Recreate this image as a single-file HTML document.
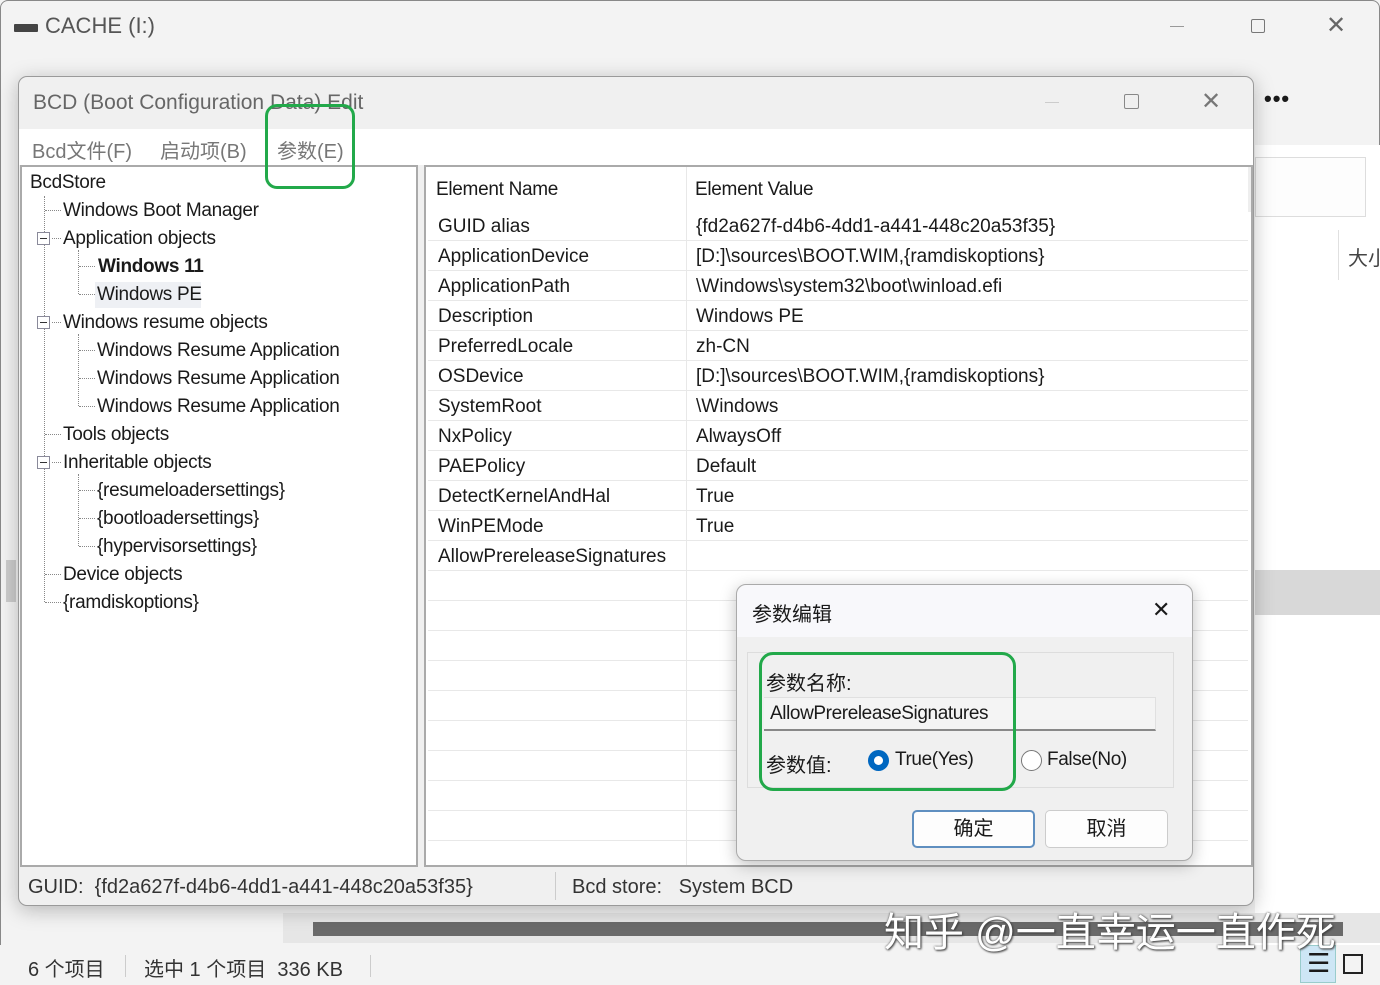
<!DOCTYPE html>
<html><head><meta charset="utf-8"><style>
*{margin:0;padding:0;box-sizing:border-box}
body{width:1380px;height:985px;overflow:hidden;background:#f3f3f3;font-family:"Liberation Sans","Noto Sans CJK SC",sans-serif;color:#1a1a1a;position:relative}
.a{position:absolute;white-space:nowrap}
.t{font-size:19px;letter-spacing:-0.3px}
.row{position:absolute;left:428px;width:820px;height:30px;border-bottom:1px solid #e8e8e8;font-size:19px}
.row span{position:absolute;top:5px}
.dot{position:absolute;border-left:1px dotted #888}
.hd{position:absolute;border-top:1px dotted #888;height:0}
.box{position:absolute;width:13px;height:13px;border:1px solid #8a8a9a;background:#fff}
.box:after{content:"";position:absolute;left:2px;top:5px;width:7px;height:1px;background:#333}
</style></head><body>
<div class="a" style="left:0;top:0;width:1380px;height:985px;border:1px solid #888;border-radius:8px;background:#f3f3f3"></div>
<div class="a" style="left:14px;top:24px;width:24px;height:8px;background:#444;border-radius:1px"></div>
<div class="a" style="left:45px;top:13px;font-size:22px;color:#555">CACHE (I:)</div>
<div class="a" style="left:1170px;top:26px;width:14px;height:1px;background:#999"></div>
<div class="a" style="left:1251px;top:19px;width:14px;height:14px;border:1.5px solid #777;border-radius:2px"></div>
<div class="a" style="left:1326px;top:11px;font-size:24px;color:#666">✕</div>
<div class="a" style="left:1264px;top:86px;font-size:22px;font-weight:bold;letter-spacing:1px">•••</div>
<div class="a" style="left:1255px;top:145px;width:125px;height:840px;background:#fff"></div>
<div class="a" style="left:1255px;top:157px;width:111px;height:60px;border:1px solid #ddd;background:#fdfdfd"></div>
<div class="a" style="left:1338px;top:230px;width:1px;height:50px;background:#e0e0e0"></div>
<div class="a" style="left:1348px;top:242px;font-size:20px;color:#444">大小</div>
<div class="a" style="left:1255px;top:570px;width:125px;height:45px;background:#d8d8d8"></div>
<div class="a" style="left:6px;top:560px;width:10px;height:42px;background:#ccc"></div>
<div class="a" style="left:283px;top:913px;width:1097px;height:30px;background:#e6e6e6"></div>
<div class="a" style="left:313px;top:922px;width:1030px;height:14px;background:#6a6a6a"></div>
<div class="a" style="left:0;top:945px;width:1380px;height:40px;background:#f3f3f3"></div>
<div class="a" style="left:28px;top:953px;font-size:20px;color:#333">6 个项目</div>
<div class="a" style="left:125px;top:955px;width:1px;height:22px;background:#ccc"></div>
<div class="a" style="left:144px;top:953px;font-size:20px;color:#333">选中 1 个项目&nbsp; 336 KB</div>
<div class="a" style="left:370px;top:955px;width:1px;height:22px;background:#ccc"></div>
<div class="a" style="left:1300px;top:945px;width:36px;height:38px;background:#cde6f5;border:1px solid #9cc"></div>
<div class="a" style="left:1307px;top:948px;font-size:26px">☰</div>
<div class="a" style="left:1343px;top:954px;width:20px;height:20px;border:2px solid #222"></div>
<div class="a" style="left:18px;top:76px;width:1236px;height:830px;background:#f0f0f0;border:1px solid #9a9a9a;border-radius:9px;box-shadow:0 4px 20px rgba(0,0,0,.25)"></div>
<div class="a" style="left:33px;top:91px;font-size:21px;color:#666">BCD (Boot Configuration Data) Edit</div>
<div class="a" style="left:1045px;top:102px;width:14px;height:1px;background:#ccc"></div>
<div class="a" style="left:1124px;top:94px;width:15px;height:15px;border:1.5px solid #888;border-radius:2px"></div>
<div class="a" style="left:1201px;top:87px;font-size:24px;color:#777">✕</div>
<div class="a" style="left:19px;top:129px;width:1234px;height:36px;background:#fff"></div>
<div class="a" style="left:32px;top:135px;font-size:20px;color:#777">Bcd文件(F)</div>
<div class="a" style="left:160px;top:135px;font-size:20px;color:#777">启动项(B)</div>
<div class="a" style="left:277px;top:135px;font-size:20px;color:#777">参数(E)</div>
<div class="a" style="left:20px;top:165px;width:398px;height:702px;background:#fff;border:2px solid #aaa"></div>
<div class="a t" style="left:30px;top:172px">BcdStore</div>
<div class="dot" style="left:44px;top:196px;height:406px"></div>
<div class="dot" style="left:78px;top:250px;height:44px"></div>
<div class="dot" style="left:78px;top:334px;height:72px"></div>
<div class="dot" style="left:78px;top:474px;height:72px"></div>
<div class="hd" style="left:45px;top:210px;width:16px"></div>
<div class="hd" style="left:52px;top:238px;width:9px"></div>
<div class="hd" style="left:79px;top:266px;width:16px"></div>
<div class="hd" style="left:79px;top:294px;width:16px"></div>
<div class="hd" style="left:52px;top:322px;width:9px"></div>
<div class="hd" style="left:79px;top:350px;width:16px"></div>
<div class="hd" style="left:79px;top:378px;width:16px"></div>
<div class="hd" style="left:79px;top:406px;width:16px"></div>
<div class="hd" style="left:45px;top:434px;width:16px"></div>
<div class="hd" style="left:52px;top:462px;width:9px"></div>
<div class="hd" style="left:79px;top:490px;width:16px"></div>
<div class="hd" style="left:79px;top:518px;width:16px"></div>
<div class="hd" style="left:79px;top:546px;width:16px"></div>
<div class="hd" style="left:45px;top:574px;width:16px"></div>
<div class="hd" style="left:45px;top:602px;width:16px"></div>
<div class="box" style="left:37px;top:232px"></div>
<div class="box" style="left:37px;top:316px"></div>
<div class="box" style="left:37px;top:456px"></div>
<div class="a t" style="left:63px;top:200px">Windows Boot Manager</div>
<div class="a t" style="left:63px;top:228px">Application objects</div>
<div class="a t" style="left:98px;top:256px;font-weight:bold">Windows 11</div>
<div class="a" style="left:95px;top:282px;width:106px;height:26px;background:#eef0f4"></div>
<div class="a t" style="left:97px;top:284px">Windows PE</div>
<div class="a t" style="left:63px;top:312px">Windows resume objects</div>
<div class="a t" style="left:97px;top:340px">Windows Resume Application</div>
<div class="a t" style="left:97px;top:368px">Windows Resume Application</div>
<div class="a t" style="left:97px;top:396px">Windows Resume Application</div>
<div class="a t" style="left:63px;top:424px">Tools objects</div>
<div class="a t" style="left:63px;top:452px">Inheritable objects</div>
<div class="a t" style="left:97px;top:480px">{resumeloadersettings}</div>
<div class="a t" style="left:97px;top:508px">{bootloadersettings}</div>
<div class="a t" style="left:97px;top:536px">{hypervisorsettings}</div>
<div class="a t" style="left:63px;top:564px">Device objects</div>
<div class="a t" style="left:63px;top:592px">{ramdiskoptions}</div>
<div class="a" style="left:424px;top:165px;width:829px;height:702px;background:#fff;border:2px solid #aaa"></div>
<div class="a" style="left:686px;top:167px;width:1px;height:698px;background:#e8e8e8"></div>
<div class="a" style="left:1248px;top:167px;width:3px;height:45px;background:#eee"></div>
<div class="a t" style="left:436px;top:179px">Element Name</div>
<div class="a t" style="left:695px;top:179px">Element Value</div>
<div class="row" style="top:211px"><span style="left:10px">GUID alias</span><span style="left:268px">{fd2a627f-d4b6-4dd1-a441-448c20a53f35}</span></div>
<div class="row" style="top:241px"><span style="left:10px">ApplicationDevice</span><span style="left:268px">[D:]\sources\BOOT.WIM,{ramdiskoptions}</span></div>
<div class="row" style="top:271px"><span style="left:10px">ApplicationPath</span><span style="left:268px">\Windows\system32\boot\winload.efi</span></div>
<div class="row" style="top:301px"><span style="left:10px">Description</span><span style="left:268px">Windows PE</span></div>
<div class="row" style="top:331px"><span style="left:10px">PreferredLocale</span><span style="left:268px">zh-CN</span></div>
<div class="row" style="top:361px"><span style="left:10px">OSDevice</span><span style="left:268px">[D:]\sources\BOOT.WIM,{ramdiskoptions}</span></div>
<div class="row" style="top:391px"><span style="left:10px">SystemRoot</span><span style="left:268px">\Windows</span></div>
<div class="row" style="top:421px"><span style="left:10px">NxPolicy</span><span style="left:268px">AlwaysOff</span></div>
<div class="row" style="top:451px"><span style="left:10px">PAEPolicy</span><span style="left:268px">Default</span></div>
<div class="row" style="top:481px"><span style="left:10px">DetectKernelAndHal</span><span style="left:268px">True</span></div>
<div class="row" style="top:511px"><span style="left:10px">WinPEMode</span><span style="left:268px">True</span></div>
<div class="row" style="top:541px"><span style="left:10px">AllowPrereleaseSignatures</span></div>
<div class="row" style="top:571px"></div><div class="row" style="top:601px"></div><div class="row" style="top:631px"></div>
<div class="row" style="top:661px"></div><div class="row" style="top:691px"></div><div class="row" style="top:721px"></div>
<div class="row" style="top:751px"></div><div class="row" style="top:781px"></div><div class="row" style="top:811px"></div>
<div class="a" style="left:28px;top:876px;font-size:20px;color:#333">GUID:&nbsp; {fd2a627f-d4b6-4dd1-a441-448c20a53f35}</div>
<div class="a" style="left:555px;top:872px;width:1px;height:28px;background:#ccc"></div>
<div class="a" style="left:572px;top:876px;font-size:20px;color:#333">Bcd store:&nbsp;&nbsp; System BCD</div>
<div class="a" style="left:736px;top:584px;width:457px;height:277px;background:#f0f0f0;border:1px solid #aaa;border-radius:10px;box-shadow:0 4px 16px rgba(0,0,0,.25)"></div>
<div class="a" style="left:737px;top:585px;width:455px;height:52px;background:#f8f8fb;border-radius:10px 10px 0 0"></div>
<div class="a" style="left:752px;top:598px;font-size:20px">参数编辑</div>
<div class="a" style="left:1152px;top:597px;font-size:22px">✕</div>
<div class="a" style="left:747px;top:652px;width:427px;height:136px;border:1px solid #ddd"></div>
<div class="a" style="left:766px;top:667px;font-size:20px">参数名称:</div>
<div class="a" style="left:764px;top:697px;width:392px;height:34px;background:#f4f4f4;border-bottom:2px solid #888;border-top:1px solid #e0e0e0;border-right:1px solid #e0e0e0"></div>
<div class="a" style="left:770px;top:703px;font-size:19px;letter-spacing:-0.4px">AllowPrereleaseSignatures</div>
<div class="a" style="left:766px;top:749px;font-size:20px">参数值:</div>
<div class="a" style="left:868px;top:750px;width:21px;height:21px;border-radius:50%;background:#0067c0"></div>
<div class="a" style="left:874px;top:756px;width:9px;height:9px;border-radius:50%;background:#fff"></div>
<div class="a" style="left:895px;top:749px;font-size:19px;letter-spacing:-0.4px">True(Yes)</div>
<div class="a" style="left:1021px;top:750px;width:21px;height:21px;border-radius:50%;border:1px solid #777;background:#fff"></div>
<div class="a" style="left:1047px;top:749px;font-size:19px;letter-spacing:-0.4px">False(No)</div>
<div class="a" style="left:912px;top:810px;width:123px;height:38px;background:#fdfdfd;border:2px solid #5f8fc0;border-radius:5px;text-align:center;font-size:20px;line-height:34px">确定</div>
<div class="a" style="left:1045px;top:810px;width:123px;height:38px;background:#fdfdfd;border:1px solid #ccc;border-radius:5px;text-align:center;font-size:20px;line-height:36px">取消</div>
<div class="a" style="left:265px;top:104px;width:90px;height:85px;border:3px solid #22a94a;border-radius:12px"></div>
<div class="a" style="left:759px;top:652px;width:257px;height:139px;border:3px solid #22a94a;border-radius:14px"></div>
<div class="a" style="left:884px;top:900px;font-size:40px;color:#fff;text-shadow:0 0 2px #555,1px 1px 2px #333">知乎 @一直幸运一直作死</div>
</body></html>
